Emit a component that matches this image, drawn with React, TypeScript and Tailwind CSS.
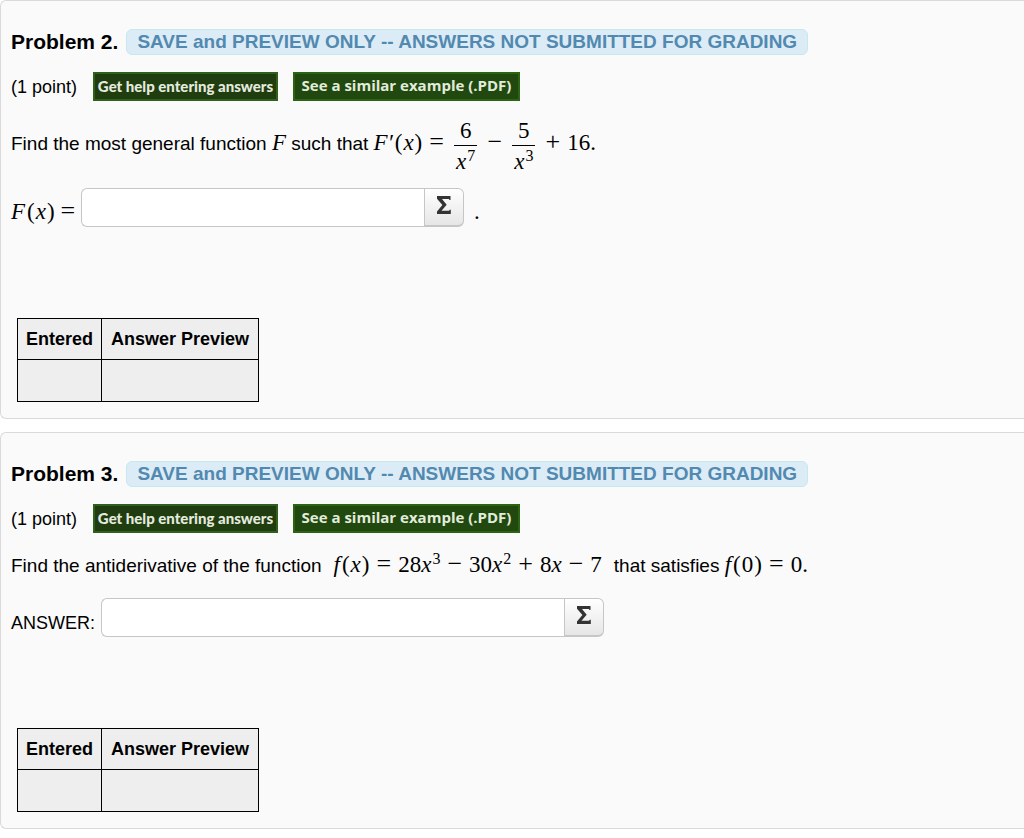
import { ReactNode, useState } from "react";

type Problem = {
  id: number;
  label: ReactNode;
  statement: ReactNode;
  inputWidth: string;
  trailing?: string;
};

function M({ children }: { children: ReactNode }) {
  return (
    <span className="font-['Liberation_Serif',serif] text-[23px] leading-6 whitespace-nowrap">
      {children}
    </span>
  );
}

function Op({ children }: { children: ReactNode }) {
  return <span className="mx-[7px] text-[26px] leading-none">{children}</span>;
}

function Sup({ children }: { children: ReactNode }) {
  return <sup className="ml-px text-[16px] leading-none">{children}</sup>;
}

// function name applied to an argument, e.g. F′(x)
function Fn({ name, arg }: { name: ReactNode; arg: ReactNode }) {
  return (
    <>
      <i className="mr-0.5">{name}</i>(<span className="mx-px">{arg}</span>)
    </>
  );
}

function Frac({ top, bottom }: { top: ReactNode; bottom: ReactNode }) {
  return (
    <span className="mx-[3px] inline-flex flex-col items-center align-middle">
      <span className="h-7 px-1.5 leading-7">{top}</span>
      <span className="h-7 border-t border-black px-0.5 leading-8">{bottom}</span>
    </span>
  );
}

const problems: Problem[] = [
  {
    id: 2,
    label: (
      <M>
        <Fn name="F" arg={<i>x</i>} /> <span className="text-[26px] leading-none">=</span>
      </M>
    ),
    statement: (
      <>
        Find the most general function{" "}
        <M>
          <i>F</i>
        </M>{" "}
        such that{" "}
        <M>
          <Fn name="F′" arg={<i>x</i>} />
          <Op>=</Op>
          <Frac top="6" bottom={<><i>x</i><Sup>7</Sup></>} />
          <Op>−</Op>
          <Frac top="5" bottom={<><i>x</i><Sup>3</Sup></>} />
          <Op>+</Op>16.
        </M>
      </>
    ),
    inputWidth: "w-[343px]",
    trailing: ".",
  },
  {
    id: 3,
    label: "ANSWER:",
    statement: (
      <>
        Find the antiderivative of the function
        <span className="mx-3">
          <M>
            <Fn name="f" arg={<i>x</i>} />
            <Op>=</Op>28<i>x</i><Sup>3</Sup>
            <Op>−</Op>30<i>x</i><Sup>2</Sup>
            <Op>+</Op>8<i>x</i>
            <Op>−</Op>7
          </M>
        </span>
        that satisfies{" "}
        <M>
          <Fn name="f" arg="0" />
          <Op>=</Op>0.
        </M>
      </>
    ),
    inputWidth: "w-[463px]",
  },
];

function ProblemCard({ problem }: { problem: Problem }) {
  const [answer, setAnswer] = useState("");
  const inputId = `answer-${problem.id}`;

  return (
    <section className="rounded-l-md border border-r-0 border-[#dadada] bg-[#fafafa] pt-7 pb-4 pl-2.5">
      {/* HEADING */}
      <div className="flex items-center gap-2">
        <h2 className="text-[21px] leading-[26px] font-bold">Problem {problem.id}.</h2>
        <div className="rounded-md border border-[#c8e8f1] bg-[#dcecf6] px-2.5 text-[19px] leading-6 font-bold whitespace-nowrap text-[#5289b0]">
          SAVE and PREVIEW ONLY -- ANSWERS NOT SUBMITTED FOR GRADING
        </div>
      </div>

      {/* POINTS + HELP BUTTONS */}
      <div className="mt-[17px] flex items-center gap-[15px]">
        <span className="w-[67px]">(1 point)</span>
        <button
          type="button"
          className="h-[29px] w-[185px] border-2 border-[#30601c] bg-[#203d10] pb-px font-['Lato',sans-serif] text-[15px] leading-6 font-black whitespace-nowrap text-[#e4eadf]"
        >
          Get help entering answers
        </button>
        <button
          type="button"
          className="flex h-[29px] w-[227px] items-center justify-center border-2 border-[#2c6415] bg-[#21480f] pb-1 font-['Open_Sans',sans-serif] text-[15px] leading-5 font-bold whitespace-nowrap text-[#e2ecdc]"
        >
          See a similar example (.PDF)
        </button>
      </div>

      <div className="mt-4 mb-[15px] min-h-[34px] text-[19px] leading-[34px]">
        {problem.statement}
      </div>

      {/* ANSWER */}
      <div className="flex items-end">
        <label htmlFor={inputId} className="mr-1.5 pb-0.5">
          {problem.label}
        </label>
        <input
          id={inputId}
          type="text"
          value={answer}
          onChange={(e) => setAnswer(e.target.value)}
          className={`h-[39px] rounded-l-md border border-r-0 border-[#c6c6c6] bg-white px-2 outline-none ${problem.inputWidth}`}
        />
        <button
          type="button"
          aria-label="Equation editor"
          className="flex h-[39px] w-10 items-center justify-center rounded-r-md border border-b-2 border-[#c6c6c6] bg-gradient-to-b from-white to-[#e6e6e6] pb-1"
        >
          <svg viewBox="0 0 14 18" className="h-[18px] w-3.5" fill="#333333">
            <path d="M0 0H13.5V4H12.5L11.8 3H5L9.7 8.7L4.5 14.8H12L12.8 13.7H13.8V18H0V15.4L5.4 9.1L0 2.7Z" />
          </svg>
        </button>
        {problem.trailing && (
          <span className="ml-2.5 pb-0.5">
            <M>{problem.trailing}</M>
          </span>
        )}
      </div>

      {/* RESULTS */}
      <table className="mt-[91px] ml-1.5 border-collapse bg-[#eeeeee]">
        <thead>
          <tr className="h-[41px]">
            <th className="w-[84px] border border-black">Entered</th>
            <th className="w-[157px] border border-black">Answer Preview</th>
          </tr>
        </thead>
        <tbody>
          <tr className="h-[42px]">
            <td className="border border-black" />
            <td className="border border-black" />
          </tr>
        </tbody>
      </table>
    </section>
  );
}

export default function App() {
  return (
    <main className="flex min-h-screen flex-col gap-[13px] bg-white font-['Liberation_Sans',Arial,sans-serif] text-[18px] leading-6 text-black">
      {problems.map((p) => (
        <ProblemCard key={p.id} problem={p} />
      ))}
    </main>
  );
}
